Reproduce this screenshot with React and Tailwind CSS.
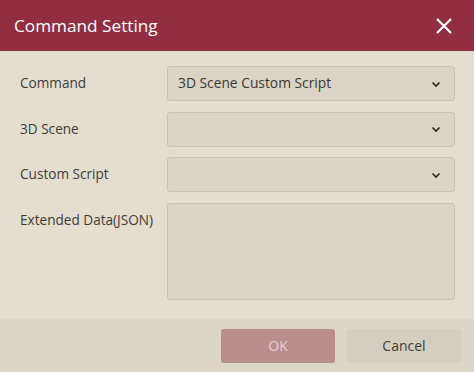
import React from 'react';

const Chevron = () => (
    <svg width="12" height="12" viewBox="0 0 12 12" className="text-[#2e2a26]">
        <path d="M2.5 4.5 L6 8 L9.5 4.5" fill="none" stroke="currentColor" strokeWidth="1.7" />
    </svg>
);

const SelectBox = ({ value }) => (
    <div className="flex h-[35px] w-[288px] items-center justify-between rounded-[3px] border border-[#c9c2b1] bg-[#d9d4c5] pl-[10px] pr-[12px] text-[13.8px] text-[#3c3934]">
        <span>{value}</span>
        <Chevron />
    </div>
);

const Row = ({ label, children }) => (
    <div className="flex items-start">
        <div className="w-[147px] pt-[7px] text-[13.6px] text-[#3f3c37]">{label}</div>
        {children}
    </div>
);

const App = () => {
    return (
        <div className="flex h-[372px] w-[474px] flex-col bg-[#e3ded0] font-['Open_Sans',sans-serif]">
            <div className="flex h-[51px] items-center justify-between bg-[#932e42] pl-[14px] pr-[21px]">
                <span className="text-[17.2px] text-white">Command Setting</span>
                <svg width="18" height="18" viewBox="0 0 18 18">
                    <path d="M2 2 L16 16 M16 2 L2 16" stroke="white" strokeWidth="2.2" />
                </svg>
            </div>

            <div className="flex flex-1 flex-col gap-[10.5px] pl-[20px] pt-[15px]">
                <Row label="Command">
                    <SelectBox value="3D Scene Custom Script" />
                </Row>
                <Row label="3D Scene">
                    <SelectBox value="" />
                </Row>
                <Row label="Custom Script">
                    <SelectBox value="" />
                </Row>
                <Row label="Extended Data(JSON)">
                    <div className="h-[97px] w-[288px] rounded-[3px] border border-[#c9c2b1] bg-[#d9d4c5]"></div>
                </Row>
            </div>

            <div className="flex h-[53px] items-center justify-end gap-[12px] bg-[#dbd6c8] pr-[13px]">
                <button className="h-[34px] w-[114px] rounded-[3px] bg-[#ba8d8f] text-[14px] text-[#e6cfcf]">OK</button>
                <button className="h-[34px] w-[114px] rounded-[3px] bg-[#d3cebf] text-[14px] text-[#3f3c37]">Cancel</button>
            </div>
        </div>
    );
};

export default App;
